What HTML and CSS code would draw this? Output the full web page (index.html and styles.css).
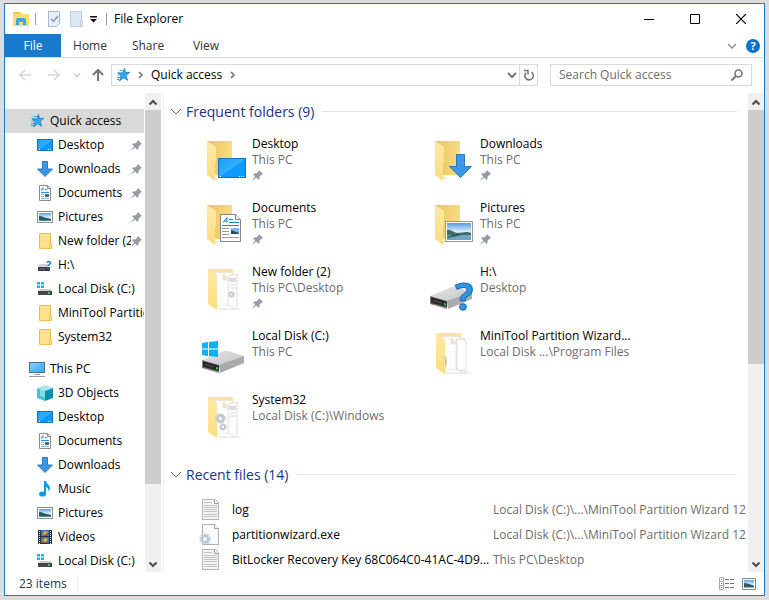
FILE: index.html
```html
<!DOCTYPE html>
<html lang="en">
  <head>
    <title>File Explorer</title>
    <meta charset="UTF-8" />
    <meta name="viewport" content="width=device-width, initial-scale=1" />
    <link rel="stylesheet" href="styles.css">
  </head>
  <body>
    <!-- shared icons -->
    <svg class="sprite" aria-hidden="true">
      <defs>
        <linearGradient id="gBack" x1="0" y1="0" x2="1" y2="0">
          <stop offset="0" stop-color="#e9c462" /><stop offset="1" stop-color="#fbdd83" />
        </linearGradient>
        <linearGradient id="gFlap" x1="0" y1="0" x2="0" y2="1">
          <stop offset="0" stop-color="#ffeaa9" /><stop offset="1" stop-color="#fddb80" />
        </linearGradient>
        <linearGradient id="gScreen" x1="0" y1="0" x2="1" y2="1">
          <stop offset="0" stop-color="#19a0fb" /><stop offset="0.5" stop-color="#33adff" /><stop offset="0.52" stop-color="#0d99fb" /><stop offset="1" stop-color="#0a9bff" />
        </linearGradient>
        <linearGradient id="gPc" x1="0" y1="0" x2="1" y2="1">
          <stop offset="0" stop-color="#8ad0ff" /><stop offset="1" stop-color="#2fa6f5" />
        </linearGradient>
        <linearGradient id="gSky" x1="0" y1="0" x2="0" y2="1">
          <stop offset="0" stop-color="#5a9be6" /><stop offset="0.5" stop-color="#d8ecfa" /><stop offset="1" stop-color="#7fb2d8" />
        </linearGradient>
        <linearGradient id="gDrive" x1="0" y1="0" x2="1" y2="1">
          <stop offset="0" stop-color="#e4e4e6" /><stop offset="1" stop-color="#c3c4c7" />
        </linearGradient>
      </defs>
      <symbol id="chev-down" viewBox="0 0 10 10"><path d="M1 3l4 4 4-4" fill="none" stroke="currentColor" stroke-width="1.300" /></symbol>
      <symbol id="chev-right" viewBox="0 0 6 8"><path d="M1 1l3 3-3 3" fill="none" stroke="#777" stroke-width="1.700" /></symbol>
      <symbol id="scroll-up" viewBox="0 0 16 16"><path d="M4.500 10.500L8 7l3.500 3.500" fill="none" stroke="#505050" stroke-width="2.200" /></symbol>
      <symbol id="scroll-down" viewBox="0 0 16 16"><path d="M4.500 6.500L8 10l3.500-3.500" fill="none" stroke="#505050" stroke-width="2.200" /></symbol>
      <symbol id="pin" viewBox="0 0 12 12"><path d="M7 1l4 4-1.500.7-2 2 .1 2.300-1.300.7-2-2.200L.8 11.200l-.3-.4 2.800-3.300L1.200 5.500 2 4.300l2.300.1 2-2z" fill="#929da5" /></symbol>
      <symbol id="star" viewBox="0 0 16 16">
        <path d="M9.500 1.500l1 4 4.300-.2-3.700 3 1.400 5-3.800-2.600-4.200 3.200 1.500-5L3.500 6.200l4.100-.4z" fill="#30aaf0" stroke="#1778be" stroke-width=".8" />
        <path d="M4.500 3.500h3M2.500 5.500h2M2.500 8h2M2 10.500h3M2 12.500h2" stroke="#3a9fe0" />
      </symbol>
      <symbol id="desktop" viewBox="0 0 16 16">
        <rect x=".5" y="2.500" width="15" height="11" fill="url(#gScreen)" stroke="#1874b8" /><path d="M2 12.500h2M11 12.500h4" stroke="#fff" stroke-dasharray="1 1" />
      </symbol>
      <symbol id="downloads" viewBox="0 0 16 16"><path d="M5.500.5h5V8h5L8 15.500.5 8h5z" fill="#3a96e4" stroke="#2c7cc2" /></symbol>
      <symbol id="documents" viewBox="0 0 16 16">
        <path d="M2.500.5h8l3 3v12h-11z" fill="#fff" stroke="#8a8a8a" /><path d="M10.500.5v3h3" fill="none" stroke="#8a8a8a" />
        <path d="M4 5.500L6 2.500v3M8 4.500h2M4 7.500h8" fill="none" stroke="#2090d8" /><path d="M4 9.500h3M4 11.500h3M4 13.500h8" stroke="#8fb3cc" /><path d="M8 9h4v3H8z" fill="#456e83" />
      </symbol>
      <symbol id="pictures" viewBox="0 0 16 16">
        <rect x=".5" y="2.500" width="15" height="11" fill="#fff" stroke="#8c8c8c" /><path d="M2 4h12v8H2z" fill="url(#gSky)" /><path d="M2 7c4 0 5 2 12 3v1H2z" fill="#2d5c5b" /><path d="M2 11h12v1H2z" fill="#4a86ab" />
      </symbol>
      <symbol id="folder" viewBox="0 0 16 16">
        <path d="M2.500.5h11v10h1v5h-12z" fill="#ffe38c" stroke="#e6c154" /><path d="M12.500 15v-4.500h2" fill="none" stroke="#e6c154" />
      </symbol>
      <symbol id="drive-h" viewBox="0 0 16 16">
        <path d="M1 10l2-3h8v3z" fill="#d0d2d4" /><path d="M1 10h12v4H1z" fill="#3b3d40" /><path d="M3 12h5" stroke="#777" />
      </symbol>
      <symbol id="drive-c" viewBox="0 0 16 16">
        <path d="M0 1h3v2.500H0zM4 1h3v2.500H4zM0 4.500h3V7H0zM4 4.500h3V7H4z" fill="#12b5ee" /><path d="M1 10l2-2h11l1 2z" fill="#c9cbcd" /><path d="M1 10h14v4H1z" fill="#444749" /><path d="M11 12h2" stroke="#3bea55" stroke-width="1.500" />
      </symbol>
      <symbol id="pc" viewBox="0 0 16 16">
        <rect x=".5" y="1.500" width="15" height="10" fill="url(#gPc)" stroke="#4d7087" /><path d="M5 13.500h6M0 15.500h16" stroke="#8fa0ad" />
      </symbol>
      <symbol id="cube" viewBox="0 0 16 16">
        <path d="M0 3l8-3 8 3-8 3z" fill="#a8e8ee" /><path d="M0 3l8 3v10l-8-3z" fill="#46c3d3" /><path d="M16 3L8 6v10l8-3z" fill="#078fae" /><path d="M3 4l5 2v7l-5-2z" fill="#81dce5" />
      </symbol>
      <symbol id="music" viewBox="0 0 16 16">
        <ellipse cx="5.500" cy="13" rx="3.500" ry="2.600" fill="#0b9bee" /><path d="M7 0h2c.3 3 4 4 4 7 0 1.500-.6 2.700-1.500 3.700.6-3-1-4.200-2.500-4.700v7H7z" fill="#0b9bee" />
      </symbol>
      <symbol id="videos" viewBox="0 0 16 16">
        <path d="M1 1h14v14H1z" fill="#303234" /><path d="M2.500 2v13M13.500 2v13" stroke="#e7e7e7" stroke-dasharray="1 1" /><path d="M4 1h8v6H4zM4 8h8v6H4z" fill="#3677b8" /><path d="M5 5l3-3 3 1-2 3zM5 12l3-3 3 1-2 3z" fill="#e0b137" /><path d="M8 5l3-1v3zM5 13h4v1H5z" fill="#b3483a" />
      </symbol>
      <symbol id="folder-lg" viewBox="0 0 48 48">
        <path d="M7 5h25v34H15z" fill="url(#gBack)" /><path d="M15 44l4-3h-4z" fill="#e4e4e4" /><path d="M7 5l9 6v14l-1 3v17l-8-6z" fill="url(#gFlap)" />
      </symbol>
      <symbol id="folder-files" viewBox="0 0 48 48">
        <path d="M8 5h25v30H8z" fill="#fce39a" /><path d="M18 44h25l-4 2H17z" fill="#eee" />
        <path d="M15 8l17 1v32H17z" fill="#fff" stroke="#e5e5e5" stroke-width=".7" />
        <path d="M28 12l9-2v36l-9-5z" fill="#fcfcfc" stroke="#d8d8d8" stroke-width=".8" /><path d="M29 15h7M29 17h7" stroke="#b9bdc0" /><path d="M30 21h6M30 24h6" stroke="#d9dcde" />
        <path d="M15 8l10 3 3 5v25l-11 1z" fill="#fdfdfd" stroke="#e2e2e2" stroke-width=".7" /><path d="M23 10v6h5z" fill="#f4e8c4" stroke="#ddd" stroke-width=".5" />
        <path d="M8 5l9 6v35l-9-6z" fill="url(#gFlap)" />
      </symbol>
      <symbol id="gear" viewBox="0 0 12 12">
        <circle cx="6" cy="6" r="4.700" fill="none" stroke="#bcc8d1" stroke-width="2" stroke-dasharray="1.800 1.150" /><circle cx="6" cy="6" r="3.100" fill="none" stroke="#bcc8d1" stroke-width="2.400" />
      </symbol>
      <symbol id="drive-lg" viewBox="0 0 48 48">
        <path d="M2 32l22-9q2-.6 4 0l16 5-25 10z" fill="url(#gDrive)" /><path d="M19 37l25-9v7L20 45z" fill="#aaabad" /><path d="M2 32l17 5v8L2 40z" fill="#7f8082" /><path d="M3 33l16 4.500V43L3 39z" fill="#29292b" /><path d="M5 36.500l9 2.500" stroke="#555" /><path d="M16 39l2 .6v2l-2-.6z" fill="#34dc38" />
      </symbol>
      <symbol id="text-file" viewBox="0 0 24 24">
        <path d="M4.500 1.500h13l3 3v17h-16z" fill="#f4f4f2" stroke="#b4b4b4" /><path d="M16.500 1.500v4h4" fill="#fff" stroke="#999" />
        <path d="M6 4.500h8M6 7.500h13M6 9.500h13M6 11.500h13M6 13.500h13M6 16.500h13M6 18.500h13" stroke="#c2c2c2" />
      </symbol>
    </svg>

    <div class="window">
      <header class="titlebar">
        <svg class="app-icon" width="16" height="16" viewBox="0 0 16 16"><path d="M0 1h8l1 2h7v12H0z" fill="#ffdc70" /><path d="M1 2h6" stroke="#e3af2a" /><path d="M3 14V9q0-2 2-2h6q2 0 2 2v5h-3v-3H6v3z" fill="#36abe2" /></svg>
        <span class="bar"></span>
        <button class="quick" aria-label="Properties"><svg width="12" height="16" viewBox="0 0 12 16"><path d="M.5.500h11v12l-3 3h-8z" fill="#e8eef8" stroke="#a8b7d0" /><path d="M3 8l2.500 2.500L10 5" fill="none" stroke="#8398b8" stroke-width="1.500" /></svg></button>
        <button class="quick" aria-label="New folder"><svg width="13" height="16" viewBox="0 0 13 16"><path d="M.5.500h11v9h1v6H.5z" fill="#dde6f3" stroke="#c3cfe1" /><path d="M10.500 15v-5h2" fill="none" stroke="#c3cfe1" /></svg></button>
        <button class="quick more" aria-label="Customize Quick Access Toolbar"><svg width="7" height="8" viewBox="0 0 7 8"><path d="M0 1h7v1.500H0zM0 4h7L3.500 7.500z" fill="#111" /></svg></button>
        <span class="bar"></span>
        <h1>File Explorer</h1>
        <button class="caption" aria-label="Minimize"><svg width="10" height="10" viewBox="0 0 10 10"><path d="M0 5.500h10" stroke="#000" /></svg></button>
        <button class="caption" aria-label="Maximize"><svg width="10" height="10" viewBox="0 0 10 10"><path d="M.5.500h9v9h-9z" fill="none" stroke="#000" /></svg></button>
        <button class="caption" aria-label="Close"><svg width="10" height="10" viewBox="0 0 10 10"><path d="M0 0l10 10M10 0L0 10" stroke="#000" stroke-width="1.200" /></svg></button>
      </header>

      <div class="tabs">
        <button class="tab file">File</button>
        <button class="tab">Home</button>
        <button class="tab">Share</button>
        <button class="tab">View</button>
        <button class="ribbon-toggle" aria-label="Expand the Ribbon"><svg width="10" height="10"><use href="#chev-down" /></svg></button>
        <button class="help" aria-label="Help"><svg width="14" height="14" viewBox="0 0 14 14"><circle cx="7" cy="7" r="7" fill="#0a70d0" /><text x="7" y="11" class="q-help">?</text></svg></button>
      </div>

      <div class="toolbar">
        <button class="arrow" aria-label="Back" disabled><svg width="12" height="12" viewBox="0 0 12 12"><path d="M12 6H1M6 1L1 6l5 5" fill="none" stroke="#d6d6d6" stroke-width="1.600" /></svg></button>
        <button class="arrow" aria-label="Forward" disabled><svg width="12" height="12" viewBox="0 0 12 12"><path d="M0 6h11M6 1l5 5-5 5" fill="none" stroke="#d6d6d6" stroke-width="1.600" /></svg></button>
        <button class="recent" aria-label="Recent locations" disabled><svg width="8" height="8"><use href="#chev-down" /></svg></button>
        <button class="arrow up" aria-label="Up"><svg width="12" height="12" viewBox="0 0 12 12"><path d="M6 12V1M1 6l5-5 5 5" fill="none" stroke="#777" stroke-width="2" /></svg></button>
        <div class="address">
          <svg width="16" height="16"><use href="#star" /></svg>
          <svg width="6" height="8"><use href="#chev-right" /></svg>
          <a href="#">Quick access</a>
          <svg width="6" height="8"><use href="#chev-right" /></svg>
          <button class="history" aria-label="Previous locations"><svg width="10" height="10" viewBox="0 0 10 10"><path d="M1 3l4 4 4-4" fill="none" stroke="#777" stroke-width="2" /></svg></button>
          <button class="refresh" aria-label="Refresh"><svg width="12" height="12" viewBox="0 0 12 12"><path d="M8.500 3.200a4.200 4.200 0 1 1-5.500.6M1 1.500h4v4" fill="none" stroke="#777" stroke-width="1.600" /></svg></button>
        </div>
        <div class="search">
          <input type="search" placeholder="Search Quick access" aria-label="Search Quick access" />
          <svg width="12" height="12" viewBox="0 0 12 12"><circle cx="7.500" cy="4.500" r="3.500" fill="none" stroke="#777" stroke-width="1.600" /><path d="M5 7l-4.500 4.500" stroke="#777" stroke-width="2" /></svg>
        </div>
      </div>

      <div class="content">
        <nav class="tree">
          <ul>
            <li class="top selected"><a href="#"><svg><use href="#star" /></svg><span>Quick access</span></a></li>
            <li><a href="#"><svg><use href="#desktop" /></svg><span>Desktop</span><svg class="pin"><use href="#pin" /></svg></a></li>
            <li><a href="#"><svg><use href="#downloads" /></svg><span>Downloads</span><svg class="pin"><use href="#pin" /></svg></a></li>
            <li><a href="#"><svg><use href="#documents" /></svg><span>Documents</span><svg class="pin"><use href="#pin" /></svg></a></li>
            <li><a href="#"><svg><use href="#pictures" /></svg><span>Pictures</span><svg class="pin"><use href="#pin" /></svg></a></li>
            <li><a href="#"><svg><use href="#folder" /></svg><span>New folder (2)</span><svg class="pin"><use href="#pin" /></svg></a></li>
            <li><a href="#"><svg><use href="#drive-h" /><text x="9" y="12" class="q-small">?</text></svg><span>H:\</span></a></li>
            <li><a href="#"><svg><use href="#drive-c" /></svg><span>Local Disk (C:)</span></a></li>
            <li><a href="#"><svg><use href="#folder" /></svg><span>MiniTool Partition Wizard 12</span></a></li>
            <li><a href="#"><svg><use href="#folder" /></svg><span>System32</span></a></li>
          </ul>
          <ul>
            <li class="top"><a href="#"><svg><use href="#pc" /></svg><span>This PC</span></a></li>
            <li><a href="#"><svg><use href="#cube" /></svg><span>3D Objects</span></a></li>
            <li><a href="#"><svg><use href="#desktop" /></svg><span>Desktop</span></a></li>
            <li><a href="#"><svg><use href="#documents" /></svg><span>Documents</span></a></li>
            <li><a href="#"><svg><use href="#downloads" /></svg><span>Downloads</span></a></li>
            <li><a href="#"><svg><use href="#music" /></svg><span>Music</span></a></li>
            <li><a href="#"><svg><use href="#pictures" /></svg><span>Pictures</span></a></li>
            <li><a href="#"><svg><use href="#videos" /></svg><span>Videos</span></a></li>
            <li><a href="#"><svg><use href="#drive-c" /></svg><span>Local Disk (C:)</span></a></li>
          </ul>
        </nav>
        <div class="scrollbar">
          <button aria-label="Scroll up"><svg width="16" height="16"><use href="#scroll-up" /></svg></button>
          <div class="track"><div class="thumb nav-thumb"></div></div>
          <button aria-label="Scroll down"><svg width="16" height="16"><use href="#scroll-down" /></svg></button>
        </div>

        <main>
          <h2><svg width="12" height="12" viewBox="0 0 12 12"><path d="M1 3l5 5 5-5" fill="none" stroke="#666" /></svg>Frequent folders (9)</h2>
          <div class="folders">
            <a class="item" href="#">
              <svg viewBox="0 0 48 48"><use href="#folder-lg" /><rect x="18.500" y="22.500" width="27" height="19" fill="url(#gScreen)" stroke="#1874b8" /><path d="M20 40.500h1M39 40.500h6" stroke="#fff" stroke-dasharray="1 1" /></svg>
              <span class="info"><b>Desktop</b><span>This PC</span><svg class="pin"><use href="#pin" /></svg></span>
            </a>
            <a class="item" href="#">
              <svg viewBox="0 0 48 48"><use href="#folder-lg" /><path d="M28.500 18.500h8v12h7L32.500 41.500 21.500 30.500h7z" fill="#3c99e8" stroke="#2a78bd" /></svg>
              <span class="info"><b>Downloads</b><span>This PC</span><svg class="pin"><use href="#pin" /></svg></span>
            </a>
            <a class="item" href="#">
              <svg viewBox="0 0 48 48"><use href="#folder-lg" /><path d="M20.500 14.500h15l5 5v22h-20z" fill="#fff" stroke="#858585" /><path d="M35.500 14.500v5h5" fill="#eee" stroke="#858585" /><path d="M23 22.500l4-5v5M24 21h3M29 19.500h4M29 22.500h10M22 25.500h17" fill="none" stroke="#1687cc" /><path d="M22 28.500h7M22 31.500h7M22 34.500h7M22 37.500h17" stroke="#999" /><path d="M31 28h8v6h-8z" fill="#84b8de" /><path d="M31 30l8 3v1h-8z" fill="#254c5e" /></svg>
              <span class="info"><b>Documents</b><span>This PC</span><svg class="pin"><use href="#pin" /></svg></span>
            </a>
            <a class="item" href="#">
              <svg viewBox="0 0 48 48"><use href="#folder-lg" /><rect x="17.500" y="21.500" width="27" height="20" fill="#fff" stroke="#999" /><path d="M19 23h24v17H19z" fill="url(#gSky)" /><path d="M19 30c4-1 6 3 11 3 4 0 9-2 13 0v3H19z" fill="#3f6e62" /><path d="M19 35h24v5H19z" fill="#6fa4c5" /><path d="M19 37q8-4 15-2l-15 3z" fill="#335d58" /></svg>
              <span class="info"><b>Pictures</b><span>This PC</span><svg class="pin"><use href="#pin" /></svg></span>
            </a>
            <a class="item" href="#">
              <svg viewBox="0 0 48 48"><use href="#folder-files" /><use href="#gear" x="28" y="27" width="7" height="7" /></svg>
              <span class="info"><b>New folder (2)</b><span>This PC\Desktop</span><svg class="pin"><use href="#pin" /></svg></span>
            </a>
            <a class="item" href="#">
              <svg viewBox="0 0 48 48"><use href="#drive-lg" /><text x="27" y="46" class="q-large">?</text></svg>
              <span class="info"><b>H:\</b><span>Desktop</span></span>
            </a>
            <a class="item" href="#">
              <svg viewBox="0 0 48 48"><use href="#drive-lg" /><path d="M2 15l6-1v6.500H2zM9 14l9-1v7.500H9zM2 21.500h6V28l-6-1zM9 21.500h9V29l-9-1z" fill="#06b5f1" /></svg>
              <span class="info"><b>Local Disk (C:)</b><span>This PC</span></span>
            </a>
            <a class="item" href="#">
              <svg viewBox="0 0 48 48"><use href="#folder-files" /><path d="M29 11h6l3 3v29l-9-1z" fill="#fff" stroke="#ddd" /><path d="M17 27q4 6 0 13z" fill="#bcc8d1" /></svg>
              <span class="info"><b>MiniTool Partition Wizard...</b><span>Local Disk ...\Program Files</span></span>
            </a>
            <a class="item" href="#">
              <svg viewBox="0 0 48 48"><use href="#folder-files" /><use href="#gear" x="15" y="21" width="11" height="11" /><use href="#gear" x="19" y="31" width="8" height="8" /></svg>
              <span class="info"><b>System32</b><span>Local Disk (C:)\Windows</span></span>
            </a>
          </div>

          <h2><svg width="12" height="12" viewBox="0 0 12 12"><path d="M1 3l5 5 5-5" fill="none" stroke="#666" /></svg>Recent files (14)</h2>
          <table class="files">
            <tr>
              <td class="icon"><svg width="24" height="24"><use href="#text-file" /></svg></td>
              <td>log</td>
              <td class="path">Local Disk (C:)\...\MiniTool Partition Wizard 12</td>
            </tr>
            <tr>
              <td class="icon"><svg width="24" height="24" viewBox="0 0 24 24"><path d="M4.500 1.500h12l4 4v16h-16z" fill="#fafafa" stroke="#b0b0b0" /><path d="M16.500 1.500v4h4" fill="#fff" stroke="#999" /><circle cx="7" cy="16" r="3" fill="#fff" /><use href="#gear" x="1" y="10" width="12" height="12" /></svg></td>
              <td>partitionwizard.exe</td>
              <td class="path">Local Disk (C:)\...\MiniTool Partition Wizard 12</td>
            </tr>
            <tr>
              <td class="icon"><svg width="24" height="24"><use href="#text-file" /></svg></td>
              <td>BitLocker Recovery Key 68C064C0-41AC-4D9...</td>
              <td class="path">This PC\Desktop</td>
            </tr>
          </table>
        </main>
        <div class="scrollbar">
          <button aria-label="Scroll up"><svg width="16" height="16"><use href="#scroll-up" /></svg></button>
          <div class="track"><div class="thumb main-thumb"></div></div>
          <button aria-label="Scroll down"><svg width="16" height="16"><use href="#scroll-down" /></svg></button>
        </div>
      </div>

      <footer>
        <span class="count">23 items</span>
        <button aria-label="Details view"><svg width="16" height="13" viewBox="0 0 16 13"><path d="M.5.500h4v12h-4zM.5 4.500h4M.5 8.500h4" fill="none" stroke="#aaa" /><path d="M6 2.500h10M6 6.500h10M6 10.500h10" stroke="#777" stroke-dasharray="4 1" /><path d="M2 2h1v1H2zM2 6h1v1H2z" fill="#3b76b0" /><path d="M2 10h1v1H2z" fill="#d22" /></svg></button>
        <button aria-label="Large icons view"><svg width="14" height="12" viewBox="0 0 14 12"><path d="M.5.500h13v11H.5z" fill="#fff" stroke="#888" /><path d="M2 2h10v8H2z" fill="url(#gSky)" /><path d="M2 5q4 0 10 3v1H2z" fill="#2d5c5b" /></svg></button>
      </footer>
    </div>
  </body>
</html>
```

FILE: styles.css
```css
* {
  box-sizing: border-box;
}
body {
  margin: 0;
  height: 100vh;
  padding: 3px 4px 4px;
  background: #dcdcdc;
  font-family: "Open Sans", "Noto Sans", sans-serif;
  font-size: 12px;
  line-height: 16px;
  color: #000;
}
.sprite {
  position: absolute;
  width: 0;
  height: 0;
}
svg {
  display: block;
  flex: none;
}
a {
  color: inherit;
  text-decoration: none;
}
button {
  display: flex;
  align-items: center;
  justify-content: center;
  margin: 0;
  padding: 0;
  border: 0;
  background: none;
  font: inherit;
  color: inherit;
}
.window {
  display: flex;
  flex-direction: column;
  height: 100%;
  border: 1px solid #1979ca;
  background: #fff;
}

/* title bar */
.titlebar {
  display: flex;
  align-items: center;
  height: 30px;
  padding-left: 8px;
}
.bar {
  width: 1px;
  height: 12px;
  margin: 0 7px 0 6px;
  background: #999;
}
.titlebar .quick {
  width: 22px;
}
.titlebar .more {
  width: 13px;
}
h1 {
  flex: 1;
  margin: 0;
  font-size: 12px;
  font-weight: normal;
}
.caption {
  width: 46px;
  height: 30px;
}

/* ribbon tabs */
.tabs {
  display: flex;
  height: 24px;
  border-bottom: 1px solid #dadbdc;
}
.tab {
  width: 58px;
  color: #333;
}
.tab.file {
  width: 56px;
  background: #1979ca;
  color: #fff;
}
.ribbon-toggle {
  width: 20px;
  margin-left: auto;
  color: #888;
}
.help {
  width: 22px;
}
.q-help {
  font: bold 11px "Open Sans", sans-serif;
  fill: #fff;
  text-anchor: middle;
}

/* address row */
.toolbar {
  display: flex;
  height: 35px;
  padding: 6px 12px 7px 5px;
}
.arrow {
  width: 29px;
}
.recent {
  width: 18px;
  color: #bbb;
}
.arrow.up {
  width: 24px;
  margin-right: 1px;
}
.address {
  display: flex;
  flex: 1;
  align-items: center;
  gap: 8px;
  padding-left: 3px;
  border: 1px solid #d9d9d9;
}
.address svg {
  margin-right: -1px;
}
.history {
  width: 16px;
  height: 20px;
  margin-left: auto;
}
.refresh {
  width: 18px;
  height: 20px;
  margin-left: -8px;
  border-left: 1px solid #d9d9d9;
}
.search {
  display: flex;
  align-items: center;
  width: 202px;
  margin-left: 12px;
  padding: 0 8px;
  border: 1px solid #d9d9d9;
}
.search input {
  flex: 1;
  min-width: 0;
  padding: 0;
  border: 0;
  outline: 0;
  background: none;
  font: inherit;
}
.search input::placeholder {
  color: #6d6d6d;
  opacity: 1;
}

/* navigation pane */
.content {
  display: flex;
  flex: 1;
  min-height: 0;
}
.tree {
  width: 140px;
  padding: 16px 1px 0 0;
  overflow: hidden;
}
.tree ul {
  margin: 0 0 8px;
  padding: 0;
  list-style: none;
}
.tree ul:last-child {
  margin: 0;
}
.tree a {
  display: flex;
  align-items: center;
  gap: 5px;
  height: 24px;
  padding-left: 32px;
}
.tree .top a {
  padding-left: 24px;
}
.tree .selected {
  background: #d9d9d9;
}
.tree svg {
  width: 16px;
  height: 16px;
}
.tree span {
  flex: 1;
  min-width: 0;
  overflow: hidden;
  white-space: nowrap;
}
.tree .pin {
  width: 12px;
  height: 12px;
  margin: 0 1px 0 -5px;
}
.q-small {
  font: bold 11px "Open Sans", sans-serif;
  fill: #1b78c0;
}
.q-large {
  font: bold 38px "Open Sans", sans-serif;
  fill: #2f96e6;
  stroke: #1d6cad;
}

/* scroll bars */
.scrollbar {
  display: flex;
  flex-direction: column;
  width: 16px;
  background: #f0f0f0;
}
.scrollbar button {
  height: 17px;
}
.track {
  flex: 1;
}
.thumb {
  background: #cdcdcd;
}
.nav-thumb {
  height: 84%;
}
.main-thumb {
  height: 57%;
}

/* file list */
main {
  flex: 1;
  min-width: 0;
  margin-left: 2px;
  padding: 8px 11px 0 6px;
  border-left: 1px solid #f0f0f0;
  overflow: hidden;
}
h2 {
  display: flex;
  align-items: center;
  gap: 4px;
  margin: 0;
  font-size: 14px;
  font-weight: normal;
  line-height: 21px;
  color: #1e3287;
}
h2::after {
  content: "";
  flex: 1;
  height: 1px;
  margin-left: 4px;
  background: #e2e2e2;
}
.folders {
  display: grid;
  grid-template-columns: repeat(auto-fill, 228px);
  grid-auto-rows: 64px;
  padding: 14px 0 8px 30px;
}
.item {
  display: flex;
  gap: 4px;
  white-space: nowrap;
}
.item > svg {
  width: 48px;
  height: 48px;
}
.info > * {
  display: block;
}
.info b {
  font-weight: normal;
}
.info span,
.path {
  color: #6d6d6d;
}
.info .pin {
  width: 12px;
  height: 12px;
  margin-top: 1px;
}
.files {
  width: 100%;
  margin-top: 12px;
  padding-left: 28px;
  border-spacing: 0;
  table-layout: fixed;
}
.files td {
  height: 25px;
  padding: 0;
  white-space: nowrap;
}
.files .icon {
  width: 34px;
}
.files .path {
  width: 244px;
}

/* status bar */
footer {
  display: flex;
  align-items: center;
  gap: 7px;
  height: 23px;
  padding: 0 8px 0 14px;
}
.count {
  margin-right: auto;
  padding-right: 10px;
  border-right: 1px solid #e8e8e8;
  line-height: 12px;
  color: #1e395b;
}
```
